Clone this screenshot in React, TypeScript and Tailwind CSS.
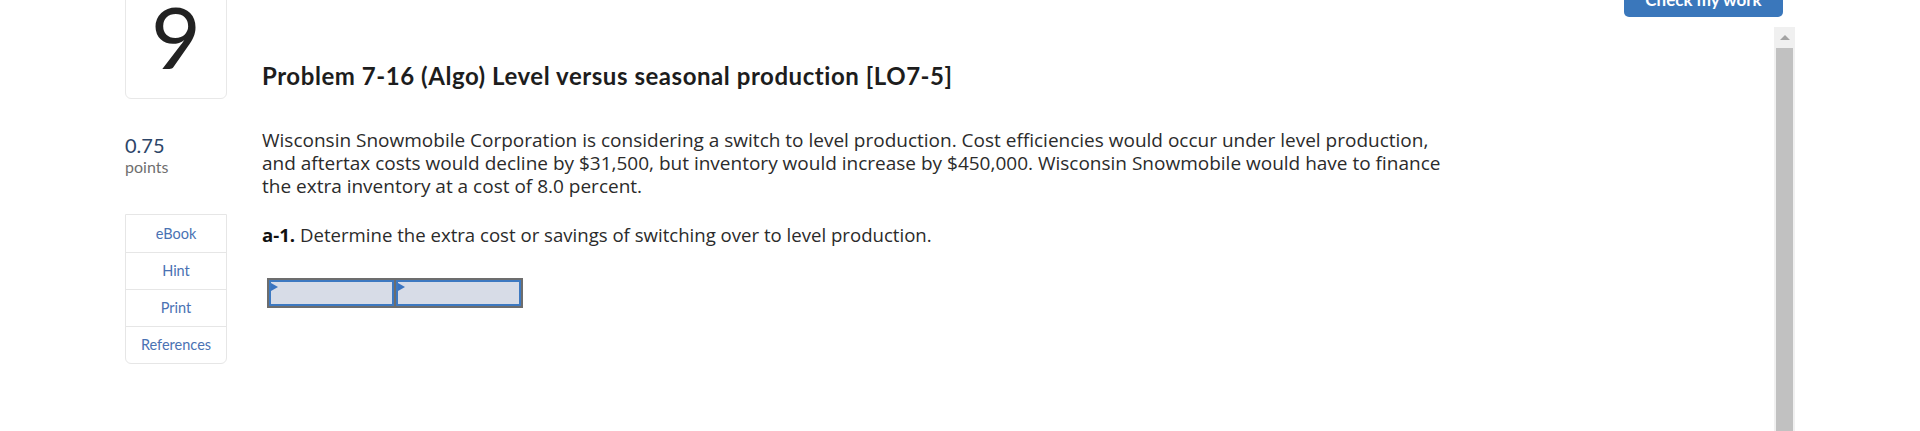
import React from 'react';

const sideLinks = ['eBook', 'Hint', 'Print', 'References'];

function AnswerCell() {
  return (
    <div className="relative w-[125px] h-full border-2 border-[#3d79c1] bg-[#d7dce7]">
      {/* little flag in the corner of each input */}
      <span className="absolute left-0 top-[1px] w-0 h-0 border-y-[4px] border-y-transparent border-l-[7px] border-l-[#3a74c0]" />
    </div>
  );
}

export default function App() {
  return (
    <div className="w-[1920px] h-[431px] overflow-hidden bg-white text-[#2b2b2b] font-['Lato',sans-serif]">
      <div className="flex h-[451px] -mt-[20px]">
        {/* left rail */}
        <div className="ml-[125px] w-[102px] flex flex-col">
          <div className="h-[119px] border border-[#e8e8e8] rounded-b-[6px] flex items-center justify-center">
            <span className="text-[86px] leading-none text-[#222] -mt-[8px]">9</span>
          </div>
          <div className="mt-[34px] text-[20px] leading-[24px] text-[#2d4568]">0.75</div>
          <div className="text-[16px] leading-[20px] text-[#6f6f6f]">points</div>
          <div className="mt-[37px] border border-[#e6e6e6] rounded-b-[6px] flex flex-col">
            {sideLinks.map((l, i) => (
              <div
                key={l}
                className={
                  'h-[37px] flex items-center justify-center text-[14.5px] text-[#4a72b3] ' +
                  (i > 0 ? 'border-t border-[#e6e6e6]' : '')
                }
              >
                {l}
              </div>
            ))}
          </div>
        </div>

        {/* question body */}
        <div className="ml-[35px] flex-1 pt-[80px]">
          <h1 className="text-[24px] leading-[32px] font-bold tracking-[0.55px] text-[#1d1d1d]">
            Problem 7-16 (Algo) Level versus seasonal production [LO7-5]
          </h1>
          <p className="mt-[37px] whitespace-nowrap text-[19px] leading-[23px] font-['Open_Sans',sans-serif]">
            Wisconsin Snowmobile Corporation is considering a switch to level production. Cost efficiencies would occur
            under level production,
            <br />
            and aftertax costs would decline by $31,500, but inventory would increase by $450,000. Wisconsin Snowmobile
            would have to finance
            <br />
            the extra inventory at a cost of 8.0 percent.
          </p>
          <p className="mt-[25px] text-[18.6px] leading-[23px] font-['Open_Sans',sans-serif]">
            <span className="font-bold text-[#111]">a-1.</span> Determine the extra cost or savings of switching over to
            level production.
          </p>
          <div className="mt-[32px] ml-[5px] inline-flex h-[30px] border-2 border-[#6d6d6d]">
            <AnswerCell />
            <div className="w-[2px] bg-[#6d6d6d]" />
            <AnswerCell />
          </div>
        </div>

        {/* right side: button and scrollbar */}
        <div className="w-[171px] mr-[125px] flex flex-col">
          <button className="w-[159px] h-[37px] bg-[#3a77bb] rounded-b-[5px] text-white font-bold text-[17px] pt-[2px]">
            Check my work
          </button>
          <div className="self-end w-[21px] flex-1 mt-[10px] bg-[#f0f0f0] flex flex-col items-center">
            <div className="h-[21px] w-full flex items-center justify-center">
              <span className="w-0 h-0 border-x-[5px] border-x-transparent border-b-[5px] border-b-[#a3a3a3]" />
            </div>
            <div className="w-[17px] flex-1 bg-[#c1c1c1]" />
          </div>
        </div>
      </div>
    </div>
  );
}
